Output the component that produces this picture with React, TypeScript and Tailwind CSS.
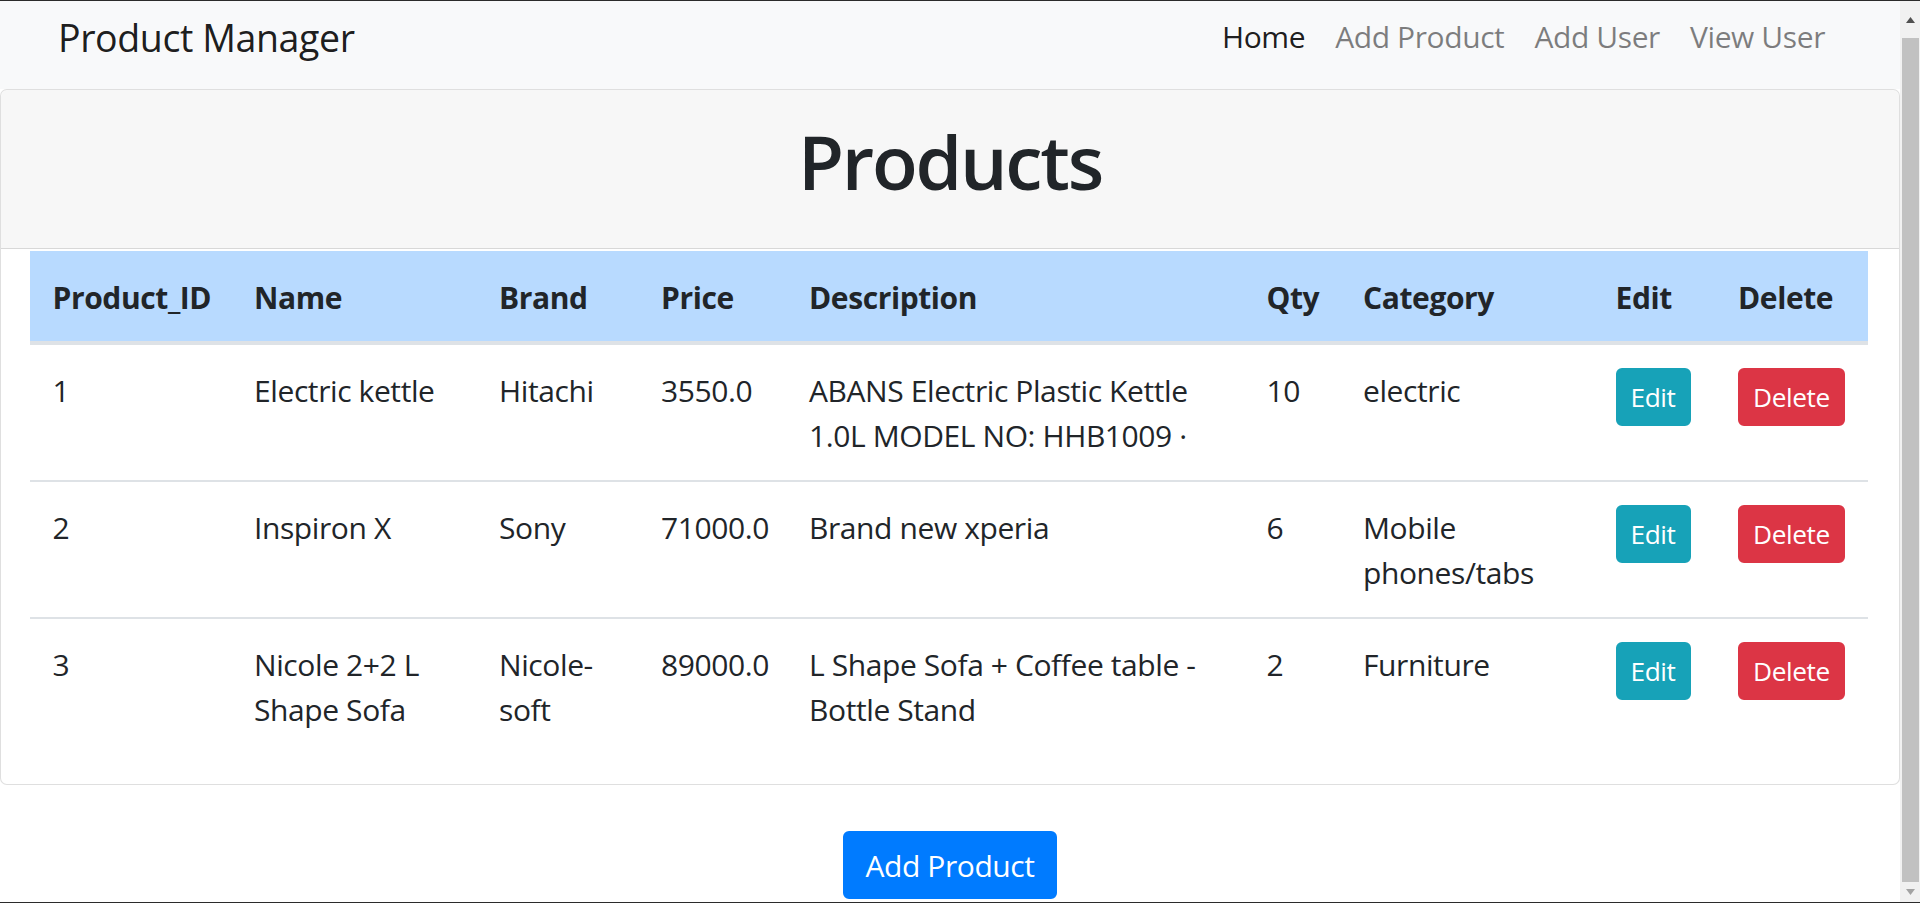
const products = [
  {
    id: "1",
    name: ["Electric kettle"],
    brand: ["Hitachi"],
    price: "3550.0",
    description: ["ABANS Electric Plastic Kettle", "1.0L MODEL NO: HHB1009 ·"],
    qty: "10",
    category: ["electric"],
  },
  {
    id: "2",
    name: ["Inspiron X"],
    brand: ["Sony"],
    price: "71000.0",
    description: ["Brand new xperia"],
    qty: "6",
    category: ["Mobile", "phones/tabs"],
  },
  {
    id: "3",
    name: ["Nicole 2+2 L", "Shape Sofa"],
    brand: ["Nicole-", "soft"],
    price: "89000.0",
    description: ["L Shape Sofa + Coffee table -", "Bottle Stand"],
    qty: "2",
    category: ["Furniture"],
  },
];

const headers = ["Product_ID", "Name", "Brand", "Price", "Description", "Qty", "Category", "Edit", "Delete"];

const Lines = ({ lines }: { lines: string[] }) => (
  <>
    {lines.map((line, i) => (
      <span key={i} className="block whitespace-nowrap">
        {line}
      </span>
    ))}
  </>
);

const Navbar = () => {
  return (
    <nav className="h-[88px] bg-[#f8f9fa] flex items-start justify-between pl-[58px] pr-[60px]">
      <a className="mt-[9px] text-[37.5px] leading-[56px] text-[rgba(0,0,0,0.9)]">Product Manager</a>
      <ul className="mt-[13px] flex text-[30px] leading-[45px]">
        <li className="px-[15px] text-[rgba(0,0,0,0.9)]">Home</li>
        <li className="px-[15px] text-[rgba(0,0,0,0.5)]">Add Product</li>
        <li className="px-[15px] text-[rgba(0,0,0,0.5)]">Add User</li>
        <li className="px-[15px] text-[rgba(0,0,0,0.5)]">View User</li>
      </ul>
    </nav>
  );
};

const ProductTable = () => {
  return (
    <table className="w-full table-fixed border-collapse text-[30px] leading-[45px] text-[#212529]">
      <colgroup>
        <col className="w-[201.5px]" />
        <col className="w-[245px]" />
        <col className="w-[162px]" />
        <col className="w-[148px]" />
        <col className="w-[457.5px]" />
        <col className="w-[96.5px]" />
        <col className="w-[252.5px]" />
        <col className="w-[122.5px]" />
        <col className="w-[152.5px]" />
      </colgroup>
      <thead>
        <tr className="bg-[#b8daff]">
          {headers.map((h) => (
            <th
              key={h}
              className="px-[22.5px] pt-[24px] pb-[21px] text-left font-bold whitespace-nowrap border-b-4 border-[#dee2e6]"
            >
              {h}
            </th>
          ))}
        </tr>
      </thead>
      <tbody>
        {products.map((p, index) => (
          <tr key={p.id} className={index > 0 ? "border-t-2 border-[#dee2e6]" : ""}>
            <td className="p-[22.5px] align-top">{p.id}</td>
            <td className="p-[22.5px] align-top">
              <Lines lines={p.name} />
            </td>
            <td className="p-[22.5px] align-top">
              <Lines lines={p.brand} />
            </td>
            <td className="p-[22.5px] align-top">{p.price}</td>
            <td className="p-[22.5px] align-top">
              <Lines lines={p.description} />
              {p.description.length === 1 && <span className="block">&nbsp;</span>}
            </td>
            <td className="p-[22.5px] align-top">{p.qty}</td>
            <td className="p-[22.5px] align-top">
              <Lines lines={p.category} />
            </td>
            <td className="p-[22.5px] align-top">
              <button className="block rounded-[6px] border-2 border-[#17a2b8] bg-[#17a2b8] px-[13px] pt-[8px] pb-[7px] text-[26.25px] leading-[39px] text-white">
                Edit
              </button>
            </td>
            <td className="p-[22.5px] align-top">
              <button className="block rounded-[6px] border-2 border-[#dc3545] bg-[#dc3545] px-[13px] pt-[8px] pb-[7px] text-[26.25px] leading-[39px] text-white">
                Delete
              </button>
            </td>
          </tr>
        ))}
      </tbody>
    </table>
  );
};

const Scrollbar = () => {
  return (
    <div className="w-[20px] bg-[#f1f1f1] flex flex-col items-center">
      <div className="h-[37px] flex items-center justify-center">
        <svg width="9" height="6" viewBox="0 0 9 6">
          <polygon points="4.5,0 9,6 0,6" fill="#505050" />
        </svg>
      </div>
      <div className="w-[17px] flex-1 bg-[#c1c1c1]" />
      <div className="h-[20px] flex items-center justify-center">
        <svg width="9" height="6" viewBox="0 0 9 6">
          <polygon points="0,0 9,0 4.5,6" fill="#a3a3a3" />
        </svg>
      </div>
    </div>
  );
};

export default function App() {
  return (
    <div className="w-[1920px] h-[903px] overflow-hidden flex flex-col border-y border-[#2b2b2b] bg-white tracking-[-0.025em] font-['Open_Sans','Noto_Sans',sans-serif]">
      <div className="flex flex-1 min-h-0">
        <main className="w-[1900px] flex flex-col">
          <Navbar />

          {/* Products card */}
          <div className="rounded-[7px] border border-[rgba(0,0,0,0.125)] bg-white">
            <div className="h-[159px] rounded-t-[7px] border-b border-[rgba(0,0,0,0.125)] bg-[rgba(0,0,0,0.03)] pt-[26px] text-center">
              <h1 className="text-[75px] leading-[90px] font-semibold tracking-[-0.03em] text-[#212529]">Products</h1>
            </div>
            <div className="pl-[29px] pr-[31px] pt-[2px] pb-[30px]">
              <ProductTable />
            </div>
          </div>

          <div className="mt-[46px] flex justify-center">
            <button className="rounded-[6px] border-2 border-[#007bff] bg-[#007bff] px-[20.5px] py-[9.5px] text-[30px] leading-[45px] text-white">
              Add Product
            </button>
          </div>
        </main>
        <Scrollbar />
      </div>
    </div>
  );
}
